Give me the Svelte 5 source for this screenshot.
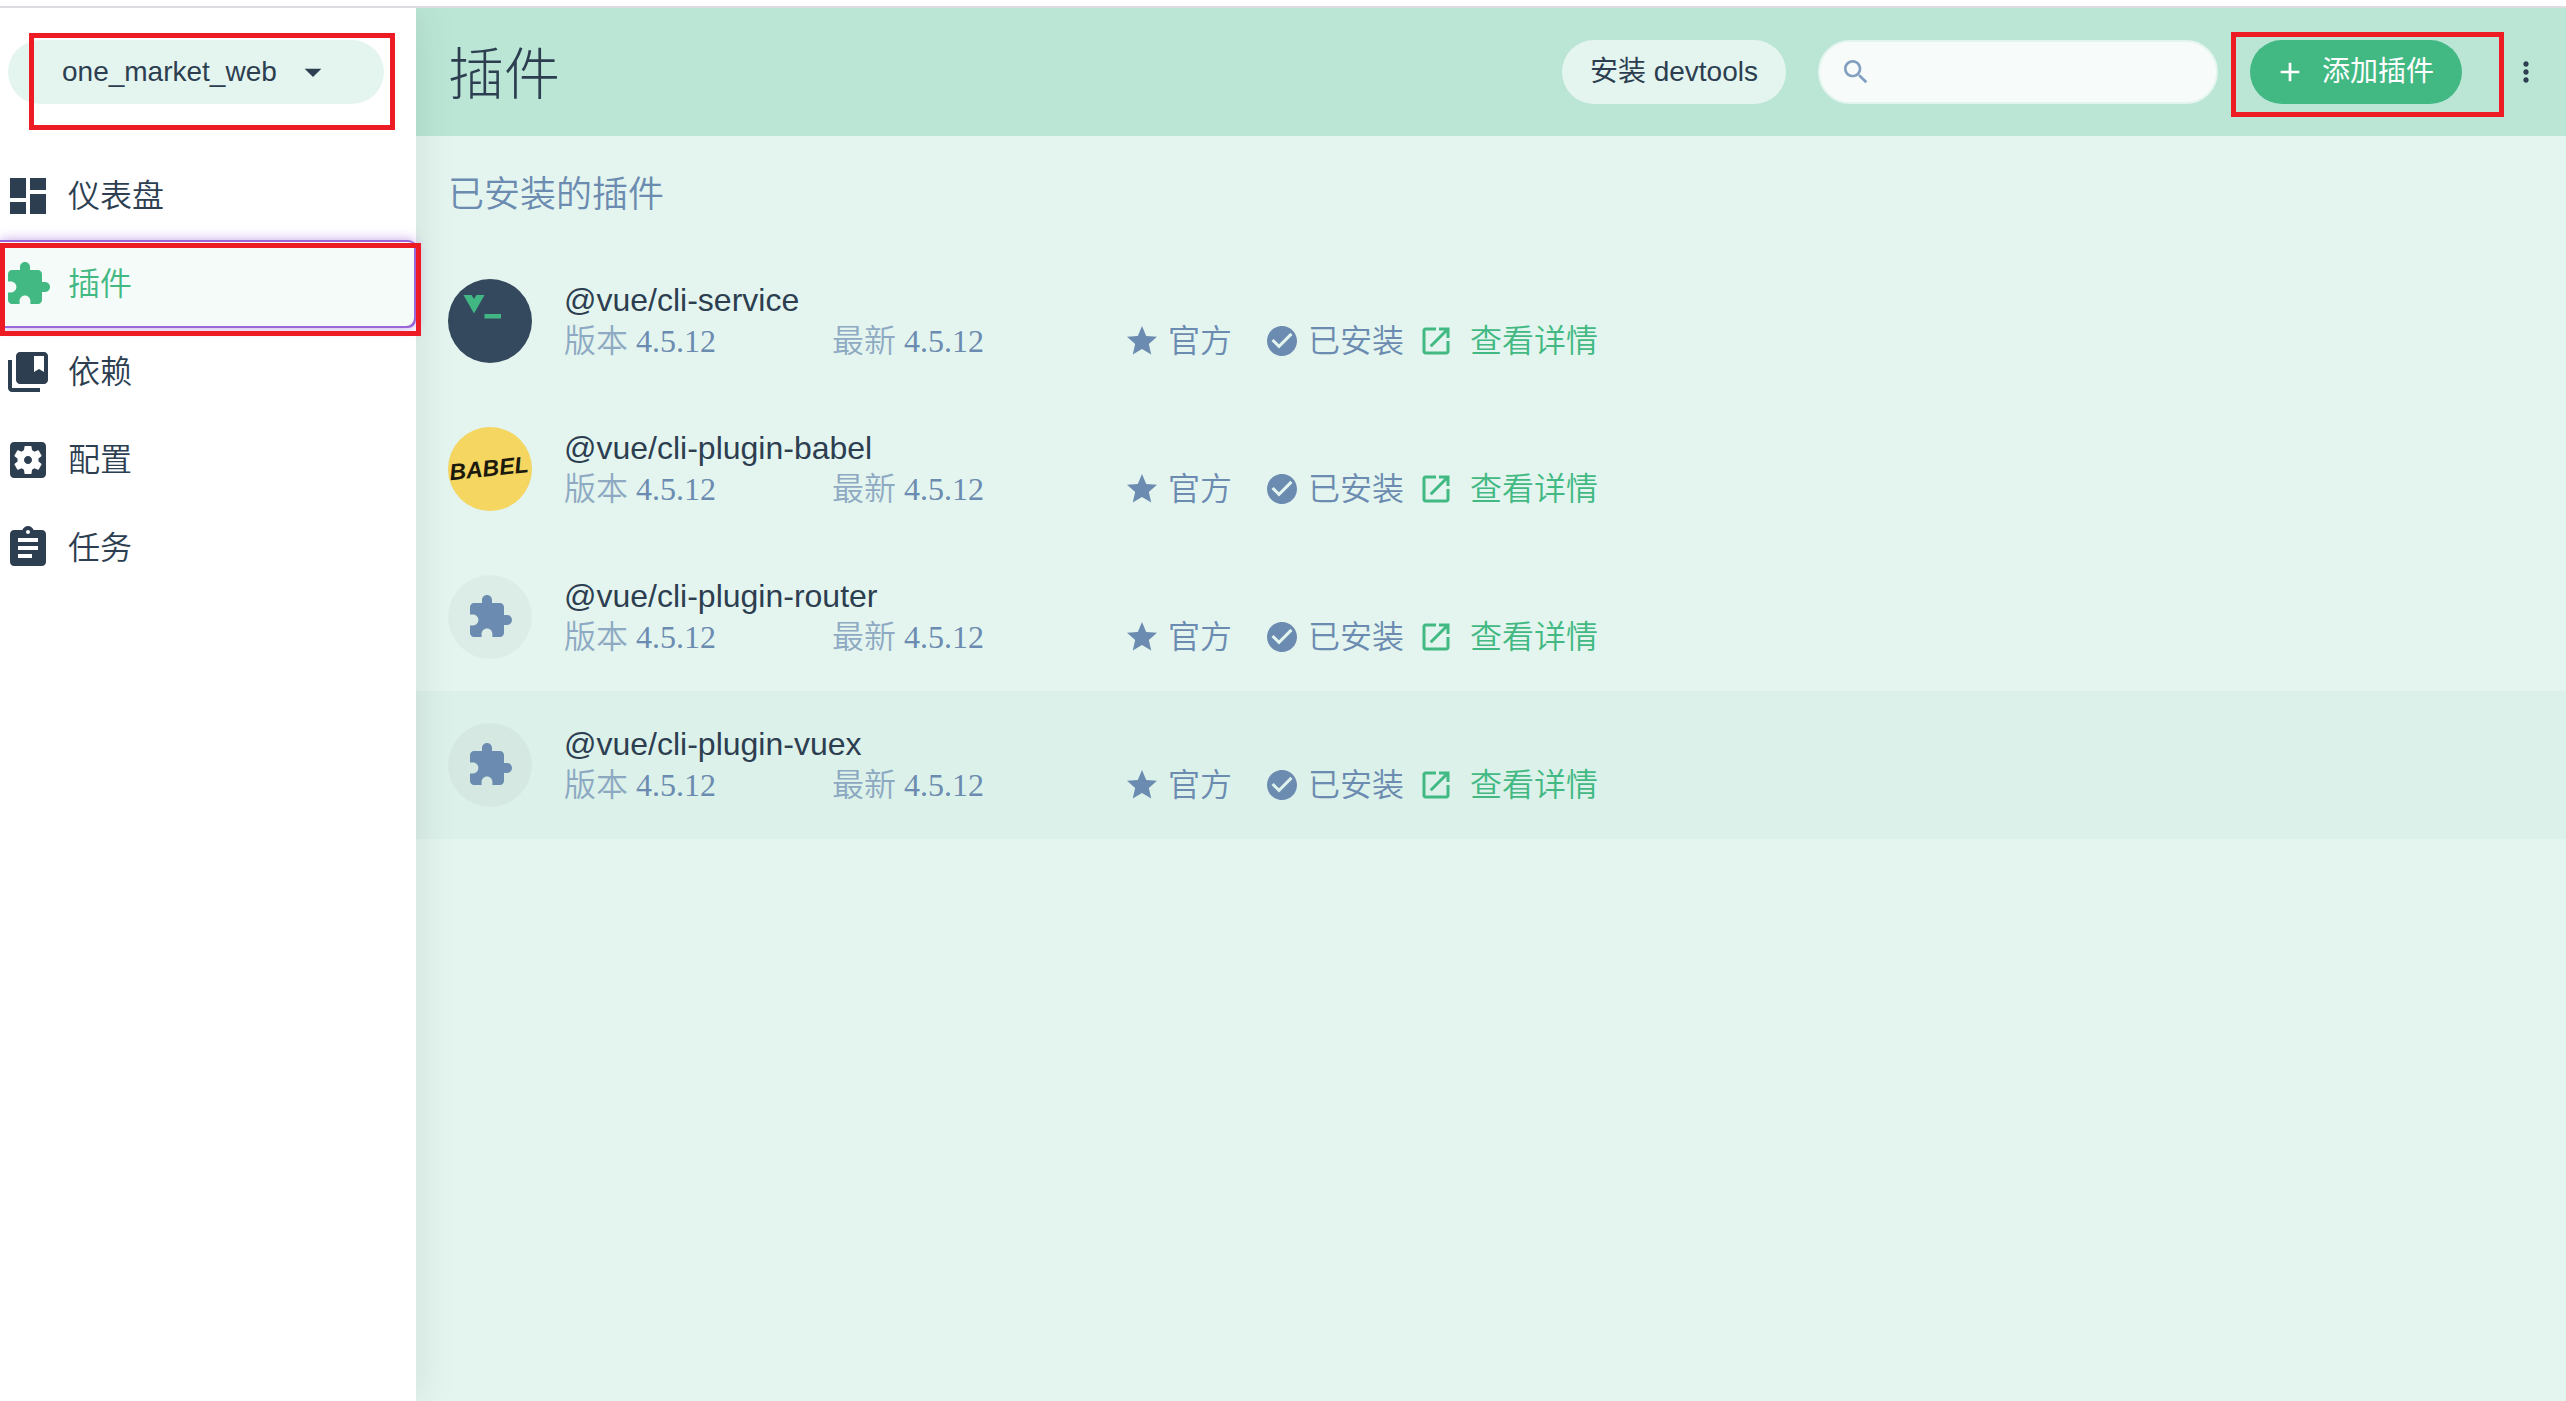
<script lang="ts">
const navItems = [
    { name: '仪表盘', icon: 'dashboard' },
    { name: '插件', icon: 'extension' },
    { name: '依赖', icon: 'collections' },
    { name: '配置', icon: 'settings' },
    { name: '任务', icon: 'assignment' },
];

const plugins = [
    { id: '@vue/cli-service', logo: 'service' },
    { id: '@vue/cli-plugin-babel', logo: 'babel' },
    { id: '@vue/cli-plugin-router', logo: '' },
    { id: '@vue/cli-plugin-vuex', logo: '' },
];

const version = '4.5.12';

const icons: Record<string, string> = {
    dashboard: 'M3 13h8V3H3v10zm0 8h8v-6H3v6zm10 0h8V11h-8v10zm0-18v6h8V3h-8z',
    extension: 'M20.5 11H19V7c0-1.1-.9-2-2-2h-4V3.5C13 2.12 11.88 1 10.5 1S8 2.12 8 3.5V5H4c-1.1 0-1.99.9-1.99 2v3.8H3.5c1.49 0 2.7 1.21 2.7 2.7s-1.21 2.7-2.7 2.7H2V20c0 1.1.9 2 2 2h3.8v-1.5c0-1.49 1.21-2.7 2.7-2.7 1.49 0 2.7 1.21 2.7 2.7V22H17c1.1 0 2-.9 2-2v-4h1.5c1.38 0 2.5-1.12 2.5-2.5S21.88 11 20.5 11z',
    collections: 'M4 6H2v14c0 1.1.9 2 2 2h14v-2H4V6zm16-4H8c-1.1 0-2 .9-2 2v12c0 1.1.9 2 2 2h12c1.1 0 2-.9 2-2V4c0-1.1-.9-2-2-2zm0 10l-2.5-1.5L15 12V4h5v8z',
    settings: 'M12 10c-1.1 0-2 .9-2 2s.9 2 2 2 2-.9 2-2-.9-2-2-2zm7-7H5c-1.11 0-2 .9-2 2v14c0 1.1.89 2 2 2h14c1.11 0 2-.9 2-2V5c0-1.1-.89-2-2-2zm-1.75 9c0 .23-.02.46-.05.68l1.48 1.16c.13.11.17.3.08.45l-1.4 2.42c-.09.15-.27.21-.43.15l-1.74-.7c-.36.28-.75.51-1.18.69l-.26 1.85c-.03.17-.18.3-.35.3h-2.8c-.17 0-.32-.13-.35-.29l-.26-1.85c-.43-.18-.82-.41-1.18-.69l-1.74.7c-.16.06-.34 0-.43-.15l-1.4-2.42c-.09-.15-.05-.34.08-.45l1.48-1.16c-.03-.23-.05-.46-.05-.69s.02-.46.05-.68l-1.48-1.16c-.13-.11-.17-.3-.08-.45l1.4-2.42c.09-.15.27-.21.43-.15l1.74.7c.36-.28.75-.51 1.18-.69l.26-1.85c.03-.17.18-.3.35-.3h2.8c.17 0 .32.13.35.29l.26 1.85c.43.18.82.41 1.18.69l1.74-.7c.16-.06.34 0 .43.15l1.4 2.42c.09.15.05.34-.08.45l-1.48 1.16c.03.23.05.46.05.69z',
    assignment: 'M19 3h-4.18C14.4 1.84 13.3 1 12 1c-1.3 0-2.4.84-2.82 2H5c-1.1 0-2 .9-2 2v14c0 1.1.9 2 2 2h14c1.1 0 2-.9 2-2V5c0-1.1-.9-2-2-2zm-7 0c.55 0 1 .45 1 1s-.45 1-1 1-1-.45-1-1 .45-1 1-1zm2 14H7v-2h7v2zm3-4H7v-2h10v2zm0-4H7V7h10v2z',
    search: 'M15.5 14h-.79l-.28-.27C15.41 12.59 16 11.11 16 9.5 16 5.91 13.09 3 9.5 3S3 5.91 3 9.5 5.91 16 9.5 16c1.61 0 3.09-.59 4.23-1.57l.27.28v.79l5 4.99L20.49 19l-4.99-5zm-6 0C7.01 14 5 11.99 5 9.5S7.01 5 9.5 5 14 7.01 14 9.5 11.99 14 9.5 14z',
    add: 'M19 13h-6v6h-2v-6H5v-2h6V5h2v6h6v2z',
    more: 'M12 8c1.1 0 2-.9 2-2s-.9-2-2-2-2 .9-2 2 .9 2 2 2zm0 2c-1.1 0-2 .9-2 2s.9 2 2 2 2-.9 2-2-.9-2-2-2zm0 6c-1.1 0-2 .9-2 2s.9 2 2 2 2-.9 2-2-.9-2-2-2z',
    arrow: 'M7 10l5 5 5-5z',
    star: 'M12 17.27L18.18 21l-1.64-7.03L22 9.24l-7.19-.61L12 2 9.19 8.63 2 9.24l5.46 4.73L5.82 21z',
    check: 'M12 2C6.48 2 2 6.48 2 12s4.48 10 10 10 10-4.48 10-10S17.52 2 12 2zm-2 15l-5-5 1.41-1.41L10 14.17l7.59-7.59L19 8l-9 9z',
    open: 'M19 19H5V5h7V3H5c-1.11 0-2 .9-2 2v14c0 1.1.89 2 2 2h14c1.1 0 2-.9 2-2v-7h-2v7zM14 3v2h3.59l-9.83 9.83 1.41 1.41L19 6.41V10h2V3h-7z',
};

let current = $state(1);
let search = $state('');
</script>

{#snippet icon(name: string, size: string)}
    <svg class="icon {size}" viewBox="0 0 24 24" aria-hidden="true"><path d={icons[name]} /></svg>
{/snippet}

<div class="app">
    <div class="top-line"></div>
    <div class="content">
        <aside class="sidebar">
            <div class="project">
                <button class="pill project-btn">
                    <span>one_market_web</span>
                    {@render icon('arrow', 'caret')}
                </button>
                <div class="mark mark-project"></div>
            </div>
            <nav>
                {#each navItems as item, i}
                    <a
                        href="#{item.icon}"
                        class="nav-item"
                        class:active={i === current}
                        onclick={() => (current = i)}
                    >
                        {@render icon(item.icon, 'big')}
                        <span>{item.name}</span>
                        {#if i === 1}<div class="mark mark-nav"></div>{/if}
                    </a>
                {/each}
            </nav>
        </aside>

        <main>
            <header>
                <h1>插件</h1>
                <div class="actions">
                    <button class="pill">安装 devtools</button>
                    <label class="search">
                        {@render icon('search', 'small')}
                        <input type="text" aria-label="search" bind:value={search} />
                    </label>
                    <div class="add">
                        <button class="pill primary">
                            {@render icon('add', 'small')}
                            <span>添加插件</span>
                        </button>
                        <div class="mark mark-add"></div>
                    </div>
                    <button class="more" aria-label="more">{@render icon('more', 'small')}</button>
                </div>
            </header>

            <h2>已安装的插件</h2>

            {#each plugins as plugin, i}
                <section class="plugin" class:hover={i === 3}>
                    <div class="logo">
                        {#if plugin.logo === 'service'}
                            <svg viewBox="0 0 84 84" aria-hidden="true">
                                <rect width="84" height="84" fill="#35495e" />
                                <path d="M15.5 16h8l2.5 4 2.5-4h8L26 34.5z" fill="#41b883" />
                                <path d="M36.5 35H53v4.5H36.5z" fill="#41b883" />
                            </svg>
                        {:else if plugin.logo === 'babel'}
                            <svg viewBox="0 0 84 84">
                                <rect width="84" height="84" fill="#f4d661" />
                                <text class="babel" x="41" y="49" text-anchor="middle" transform="rotate(-6 42 42)">BABEL</text>
                            </svg>
                        {:else}
                            {@render icon('extension', 'big')}
                        {/if}
                    </div>
                    <div class="info">
                        <div class="name">{plugin.id}</div>
                        <div class="details">
                            <div class="version"><span class="label">版本</span><span class="value">{version}</span></div>
                            <div class="version latest"><span class="label">最新</span><span class="value">{version}</span></div>
                            <div class="tag">{@render icon('star', 'medium')}<span>官方</span></div>
                            <div class="tag installed">{@render icon('check', 'medium')}<span>已安装</span></div>
                            <a class="more-link" href="#details">{@render icon('open', 'medium')}<span>查看详情</span></a>
                        </div>
                    </div>
                </section>
            {/each}
        </main>
    </div>
</div>

<style>
    :global(body) {
        margin: 0;
        background: white;
    }

    .app {
        display: flex;
        flex-direction: column;
        min-height: 100vh;
        overflow: hidden;
        font-family: "Liberation Sans", "Noto Sans CJK SC", sans-serif;
        font-size: 32px;
        font-weight: 350;
        line-height: 40px;
        color: #2c3e50;
    }

    .top-line {
        position: relative;
        z-index: 2;
        height: 6px;
        background: white;
        border-bottom: 2px solid #dcdde1;
    }

    .content {
        flex: 1;
        display: flex;
    }

    button {
        border: none;
        background: none;
        color: inherit;
        font: inherit;
        padding: 0;
        cursor: pointer;
    }

    a {
        color: inherit;
        text-decoration: none;
    }

    .icon {
        flex: none;
        fill: currentColor;
    }

    .small {
        width: 32px;
        height: 32px;
    }

    .medium {
        width: 36px;
        height: 36px;
    }

    .caret {
        width: 40px;
        height: 40px;
    }

    .big {
        width: 48px;
        height: 48px;
    }

    .pill {
        display: flex;
        align-items: center;
        height: 64px;
        padding: 0 28px;
        border-radius: 32px;
        background: #e4f5ef;
        font-size: 28px;
        font-weight: 400;
        white-space: nowrap;
    }

    /* red boxes */
    .mark {
        position: absolute;
        box-sizing: border-box;
        border: 5px solid #ed1c24;
        pointer-events: none;
        z-index: 3;
    }

    .mark-project {
        top: 25px;
        left: 29px;
        right: 21px;
        height: 97px;
    }

    .mark-nav {
        top: 3px;
        left: 0;
        right: -5px;
        height: 93px;
    }

    .mark-add {
        top: -8px;
        bottom: -13px;
        left: -19px;
        right: -42px;
    }

    /* sidebar */
    .sidebar {
        position: relative;
        z-index: 1;
        flex: none;
        width: 416px;
        background: white;
        box-shadow: 0 0 40px rgba(0, 0, 0, .1);
    }

    .project {
        position: relative;
        padding: 32px 32px 48px 8px;
    }

    .project-btn {
        width: 100%;
        padding: 0 54px;
        gap: 16px;
    }

    .nav-item {
        position: relative;
        display: flex;
        align-items: center;
        gap: 16px;
        height: 88px;
        padding-left: 4px;
    }

    .nav-item.active {
        color: #42b983;
        background: #f5fbf9;
        border-radius: 0 8px 8px 0;
        box-shadow: inset 0 2px #9b66d8, inset -2px -2px #9b66d8, 0 0 12px rgba(155, 102, 216, .6);
    }

    /* main */
    main {
        flex: 1;
        min-width: 0;
        background: #e4f5ef;
    }

    header {
        display: flex;
        align-items: center;
        justify-content: space-between;
        height: 128px;
        padding: 0 8px 0 32px;
        background: #bbe6d6;
    }

    h1 {
        margin: 0;
        padding-top: 6px;
        font-size: 56px;
        font-weight: 300;
        line-height: 64px;
    }

    .actions {
        display: flex;
        align-items: center;
        gap: 32px;
    }

    .search {
        display: flex;
        align-items: center;
        box-sizing: border-box;
        width: 400px;
        height: 64px;
        padding: 0 20px;
        border: 2px solid #e4f5ef;
        border-radius: 32px;
        background: #f7fcfa;
        color: #839fc0;
    }

    .search input {
        flex: 1;
        min-width: 0;
        border: none;
        outline: none;
        background: none;
        color: #2c3e50;
        font: inherit;
        font-size: 28px;
    }

    .add {
        position: relative;
    }

    .primary {
        gap: 16px;
        padding-left: 24px;
        background: #42b983;
        color: white;
    }

    .more {
        display: flex;
        align-items: center;
        justify-content: center;
        width: 64px;
        height: 64px;
    }

    h2 {
        margin: 0;
        padding: 33px 32px 26px;
        color: #6b8bb0;
        font-size: 36px;
        font-weight: 350;
        line-height: 52px;
    }

    .plugin {
        display: flex;
        align-items: center;
        gap: 32px;
        height: 148px;
        padding: 0 32px;
    }

    .plugin.hover {
        background: #dcf1ea;
    }

    .logo {
        display: flex;
        align-items: center;
        justify-content: center;
        flex: none;
        width: 84px;
        height: 84px;
        border-radius: 50%;
        overflow: hidden;
        background: rgba(0, 0, 0, .03);
        color: #6b8bb0;
    }

    .babel {
        font: italic bold 23px "Liberation Sans", sans-serif;
        fill: #1c1a0c;
    }

    .name {
        font-weight: 400;
    }

    .details {
        display: flex;
        align-items: center;
        height: 42px;
        color: #6b8bb0;
        white-space: nowrap;
    }

    .version {
        display: flex;
        align-items: baseline;
        gap: 8px;
        width: 268px;
    }

    .latest {
        width: 292px;
    }

    .label {
        opacity: .7;
    }

    .value {
        font-family: "Liberation Serif", serif;
    }

    .tag {
        display: flex;
        align-items: center;
        gap: 8px;
        margin-right: 32px;
    }

    .installed {
        margin-right: 14px;
    }

    .more-link {
        display: flex;
        align-items: center;
        gap: 16px;
        color: #42b983;
    }
</style>
